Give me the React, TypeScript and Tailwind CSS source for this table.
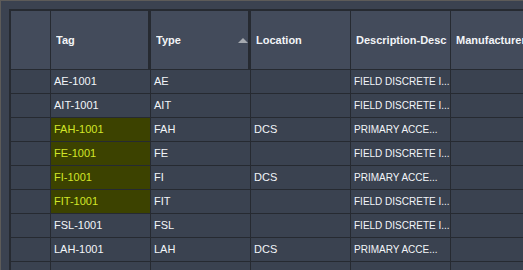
import { clsx } from "clsx";

interface TagRow {
  tag: string;
  type: string;
  location: string;
  description: string;
  flagged?: boolean;
}

const ROWS: TagRow[] = [
  { tag: "AE-1001", type: "AE", location: "", description: "FIELD DISCRETE I..." },
  { tag: "AIT-1001", type: "AIT", location: "", description: "FIELD DISCRETE I..." },
  { tag: "FAH-1001", type: "FAH", location: "DCS", description: "PRIMARY ACCE...", flagged: true },
  { tag: "FE-1001", type: "FE", location: "", description: "FIELD DISCRETE I...", flagged: true },
  { tag: "FI-1001", type: "FI", location: "DCS", description: "PRIMARY ACCE...", flagged: true },
  { tag: "FIT-1001", type: "FIT", location: "", description: "FIELD DISCRETE I...", flagged: true },
  { tag: "FSL-1001", type: "FSL", location: "", description: "FIELD DISCRETE I..." },
  { tag: "LAH-1001", type: "LAH", location: "DCS", description: "PRIMARY ACCE..." },
  { tag: "", type: "", location: "", description: "" },
];

const SortUp = () => (
  <svg width="10" height="5" viewBox="0 0 10 5" className="shrink-0">
    <polygon points="5,0 10,5 0,5" fill="#a6aab0" />
  </svg>
);

const HeadCell = ({
  label,
  thick,
  width = "w-[100px]",
  children,
}: {
  label?: string;
  thick?: boolean;
  width?: string;
  children?: React.ReactNode;
}) => (
  <div
    className={clsx(
      "flex h-full shrink-0 items-center overflow-hidden whitespace-nowrap border-[#262a31] bg-[#434b5b] pl-[5px] text-[11px] font-bold text-[#f2f4f7]",
      width,
      thick ? "border-r-[3px]" : "border-r",
      children ? "pr-0" : "pr-[3px]"
    )}
  >
    <span className="flex-1 overflow-hidden">{label}</span>
    {children}
  </div>
);

const Cell = ({
  text,
  small,
  flagged,
  width = "w-[100px]",
}: {
  text?: string;
  small?: boolean;
  flagged?: boolean;
  width?: string;
}) => (
  <div
    className={clsx(
      "flex h-full shrink-0 items-center overflow-hidden whitespace-nowrap border-r border-[#262a31] pl-[3px]",
      width,
      small ? "text-[10px]" : "text-[11px]",
      flagged ? "bg-[#3c4200] text-[#d2e628]" : "text-[#f2f5f9]"
    )}
  >
    {text}
  </div>
);

export default function App() {
  return (
    <div
      className="h-[270px] w-[523px] overflow-hidden border-l border-t border-[#5d5b59] bg-[#3b4250] pl-[8px] pt-[8px]"
      style={{ fontFamily: '"Liberation Sans", Arial, sans-serif' }}
    >
      <div className="w-[700px] border-l-2 border-t-2 border-[#262a31] bg-[#3a4250]">
        {/* column headers */}
        <div className="flex h-[59px] border-b border-[#262a31]">
          <HeadCell width="w-[40px]" />
          <HeadCell label="Tag" thick />
          <HeadCell label="Type" thick>
            <SortUp />
          </HeadCell>
          <HeadCell label="Location" />
          <HeadCell label="Description-Description" />
          <HeadCell label="Manufacturer" />
          <HeadCell label="Model" />
        </div>

        {ROWS.map((row, i) => (
          <div key={i} className="flex h-[24px] border-b border-[#262a31]">
            <Cell width="w-[40px]" />
            <Cell text={row.tag} flagged={row.flagged} />
            <Cell text={row.type} />
            <Cell text={row.location} />
            <Cell text={row.description} small />
            <Cell />
            <Cell />
          </div>
        ))}
      </div>
    </div>
  );
}
